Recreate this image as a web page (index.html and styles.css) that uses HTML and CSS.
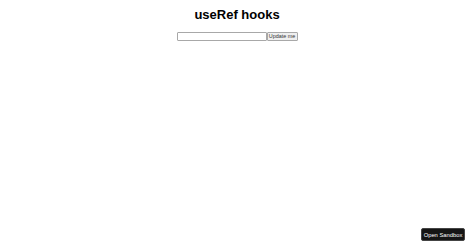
FILE: index.html
```html
<!DOCTYPE html>
<html>
<head>
<meta charset="utf-8">
<link rel="stylesheet" href="styles.css">
</head>
<body>
<div class="app">
  <h1 class="title">useRef hooks</h1>
  <div class="form">
    <input class="field" type="text"><button class="btn">Update me</button>
  </div>
</div>
<a class="sandbox">Open Sandbox</a>
</body>
</html>
```
FILE: styles.css
```css
html, body {
  margin: 0;
  padding: 0;
  background: #ffffff;
  font-family: "Liberation Sans", Arial, sans-serif;
}
.app {
  text-align: center;
  padding-top: 7px;
}
.title {
  font-size: 13px;
  line-height: 16px;
  font-weight: bold;
  color: #000;
  margin: 0 0 9px 0;
}
.form {
  display: flex;
  justify-content: center;
  align-items: stretch;
}
.field {
  box-sizing: border-box;
  width: 90px;
  height: 9px;
  margin: 0;
  padding: 0;
  border: 1px solid #a8a8a8;
  border-radius: 1px;
  background: #fff;
}
.btn {
  box-sizing: border-box;
  height: 9px;
  width: 31px;
  margin: 0;
  padding: 0;
  font-family: "Liberation Sans", Arial, sans-serif;
  font-size: 5.4px;
  line-height: 7px;
  color: #333;
  background: #efefef;
  border: 1px solid #a8a8a8;
  border-radius: 1px;
}
.sandbox {
  position: fixed;
  right: 9px;
  bottom: 7px;
  box-sizing: border-box;
  width: 44px;
  height: 13px;
  display: flex;
  align-items: center;
  justify-content: center;
  background: #151515;
  border: 1px solid #444;
  border-radius: 2px;
  color: #fff;
  font-size: 5.8px;
}
```
